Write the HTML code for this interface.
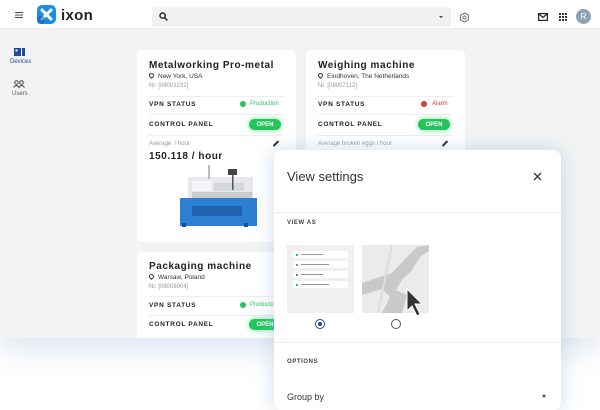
<!DOCTYPE html>
<html><head><meta charset="utf-8"><style>
*{box-sizing:border-box;margin:0;padding:0}
body{width:600px;height:400px;overflow:hidden;background:#fff;font-family:"Liberation Sans",sans-serif;position:relative;color:#222}
.abs{position:absolute}
.app{left:0;top:0;width:600px;height:338px;background:#f3f3f3;box-shadow:0 10px 30px rgba(170,195,225,.45)}
.top{left:0;top:0;width:600px;height:29px;background:#fff;border-bottom:1px solid #ececec}
.card{background:#fff;border-radius:5px;position:absolute}
.t{font-weight:bold;font-size:10px;letter-spacing:.55px;color:#222;position:absolute;left:12px;white-space:nowrap}
.s{font-size:6.5px;color:#333;position:absolute;left:12px;white-space:nowrap}
.g{font-size:6px;color:#999;position:absolute;left:12px;white-space:nowrap}
.lb{font-size:6.5px;font-weight:bold;letter-spacing:.7px;color:#222;position:absolute;left:12px}
.hr{position:absolute;left:12px;right:12px;height:1px;background:#eee}
.dot{position:absolute;width:6px;height:6px;border-radius:3px}
.open{position:absolute;width:32px;height:11px;border-radius:6px;background:#25c55c;color:#fff;font-size:6px;font-weight:bold;display:flex;align-items:center;justify-content:center;box-shadow:0 0 6px rgba(37,197,92,.6)}
.pin{display:inline-block;width:5px;height:5px;border-radius:50% 50% 50% 0;transform:rotate(-45deg);border:1.3px solid #333;margin-right:4px}
</style></head><body>
<div class="abs app"></div>
<div class="abs top"></div>
<div class="abs" style="left:15px;top:12px;width:8px;height:1.3px;background:#444;box-shadow:0 2.5px 0 #444,0 5px 0 #444"></div>
<svg class="abs" style="left:37px;top:5px" width="19" height="19" viewBox="0 0 19 19"><rect x="0" y="0" width="19" height="19" rx="5" fill="#1a8fe0"/><path d="M5 5L14 14M14 5L5 14" stroke="#fff" stroke-width="3" stroke-linecap="round"/><rect x="0" y="11" width="8" height="8" rx="3" fill="#1660b8" opacity=".6"/></svg>
<div class="abs" style="left:61px;top:7px;font-size:15px;font-weight:bold;color:#222;letter-spacing:.3px">ixon</div>
<div class="abs" style="left:152px;top:7px;width:299px;height:20px;background:#f1f1f1;border-radius:2px"></div>
<svg class="abs" style="left:159px;top:12px" width="9" height="9"><circle cx="3.6" cy="3.6" r="2.6" stroke="#222" stroke-width="1.4" fill="none"/><path d="M5.5 5.5L8.3 8.3" stroke="#222" stroke-width="1.5"/></svg>
<div class="abs" style="left:439px;top:16px;border:2px solid transparent;border-top:2.5px solid #444"></div>
<svg class="abs" style="left:459px;top:12px" width="11" height="11"><path d="M5.5 1L9.5 3.2V7.8L5.5 10L1.5 7.8V3.2Z" fill="none" stroke="#777" stroke-width="1"/><circle cx="5.5" cy="5.5" r="1.6" fill="none" stroke="#777"/></svg>
<svg class="abs" style="left:538px;top:13px" width="10" height="8"><rect x=".6" y=".6" width="8.8" height="6.8" fill="none" stroke="#222" stroke-width="1.2"/><path d="M1 1L5 4.5L9 1" fill="none" stroke="#222" stroke-width="1.2"/></svg>
<svg class="abs" style="left:559px;top:13px" width="8" height="8" fill="#333"><rect x="0" y="0" width="2" height="2"/><rect x="3" y="0" width="2" height="2"/><rect x="6" y="0" width="2" height="2"/><rect x="0" y="3" width="2" height="2"/><rect x="3" y="3" width="2" height="2"/><rect x="6" y="3" width="2" height="2"/><rect x="0" y="6" width="2" height="2"/><rect x="3" y="6" width="2" height="2"/><rect x="6" y="6" width="2" height="2"/></svg>
<div class="abs" style="left:576px;top:9px;width:15px;height:15px;border-radius:50%;background:#8ea3b4;color:#fff;font-size:8px;text-align:center;line-height:15px">R</div>
<svg class="abs" style="left:14px;top:48px" width="11" height="8"><rect x="0" y="0" width="7" height="8" fill="#1c4a9c"/><rect x="8" y="0" width="3" height="8" fill="#1c4a9c"/><rect x="1.5" y="1.5" width="2" height="2" fill="#fff"/></svg>
<div class="abs" style="left:10px;top:59px;font-size:6px;color:#1c4a9c">Devices</div>
<svg class="abs" style="left:13px;top:80px" width="12" height="8"><circle cx="3.5" cy="2.5" r="1.8" fill="none" stroke="#444"/><circle cx="8.5" cy="2.5" r="1.8" fill="none" stroke="#444"/><path d="M.5 7.5Q3.5 3.5 6 7.5Q8.5 3.5 11.5 7.5" fill="none" stroke="#444"/></svg>
<div class="abs" style="left:12px;top:91px;font-size:6px;color:#555">Users</div>

<div class="card" style="left:137px;top:50px;width:159px;height:192px">
<div class="t" style="top:10px">Metalworking Pro-metal</div>
<div class="s" style="top:23px"><span class="pin"></span>New York, USA</div>
<div class="g" style="top:33px">Nr. [08001232]</div>
<div class="hr" style="top:46px"></div>
<div class="lb" style="top:51px">VPN STATUS</div>
<div class="dot" style="left:103px;top:51px;background:#25c55c"></div>
<div class="s" style="left:113px;top:51px;color:#25c55c;font-size:6px">Production</div>
<div class="hr" style="top:64px"></div>
<div class="lb" style="top:71px">CONTROL PANEL</div>
<div class="open" style="left:112px;top:69px">OPEN</div>
<div class="hr" style="top:85px"></div>
<div class="g" style="top:91px">Average &nbsp;/ hour</div>
<div class="abs" style="left:138px;top:90px;width:1.8px;height:7px;background:#222;transform:rotate(45deg)"></div>
<div class="t" style="top:101px">150.118 / hour</div>
<svg class="abs" style="left:41px;top:115px" width="80" height="70">
<rect x="10" y="12" width="65" height="22" fill="#e6e8ec"/><rect x="14" y="16" width="20" height="10" fill="#f5f5f7"/><rect x="36" y="18" width="30" height="8" fill="#d4d7dc"/><rect x="50" y="4" width="9" height="6" fill="#444"/><rect x="54" y="10" width="1.5" height="15" fill="#555"/><rect x="30" y="0" width="2" height="14" fill="#bbb"/><rect x="14" y="27" width="60" height="6" fill="#c8cbd0"/>
<rect x="2" y="33" width="77" height="28" fill="#2d7fd3"/><rect x="14" y="41" width="50" height="10" fill="#1f63b0"/><rect x="4" y="58" width="4" height="4" fill="#1a4f90"/><rect x="66" y="58" width="4" height="4" fill="#1a4f90"/></svg>
</div>

<div class="card" style="left:306px;top:50px;width:159px;height:110px">
<div class="t" style="top:10px">Weighing machine</div>
<div class="s" style="top:23px"><span class="pin"></span>Eindhoven, The Netherlands</div>
<div class="g" style="top:33px">Nr. [08007112]</div>
<div class="hr" style="top:46px"></div>
<div class="lb" style="top:51px">VPN STATUS</div>
<div class="dot" style="left:115px;top:51px;background:#e53935"></div>
<div class="s" style="left:126px;top:51px;color:#e53935;font-size:6px">Alarm</div>
<div class="hr" style="top:64px"></div>
<div class="lb" style="top:71px">CONTROL PANEL</div>
<div class="open" style="left:112px;top:69px">OPEN</div>
<div class="hr" style="top:85px"></div>
<div class="g" style="top:91px">Average broken eggs / hour</div>
<div class="abs" style="left:138px;top:90px;width:1.8px;height:7px;background:#222;transform:rotate(45deg)"></div>
</div>

<div class="card" style="left:137px;top:252px;width:159px;height:86px;border-radius:5px 5px 0 0">
<div class="t" style="top:9px">Packaging machine</div>
<div class="s" style="top:22px"><span class="pin"></span>Warsaw, Poland</div>
<div class="g" style="top:32px">Nr. [08008004]</div>
<div class="hr" style="top:44px"></div>
<div class="lb" style="top:50px">VPN STATUS</div>
<div class="dot" style="left:103px;top:50px;background:#25c55c"></div>
<div class="s" style="left:113px;top:50px;color:#25c55c;font-size:6px">Production</div>
<div class="hr" style="top:63px"></div>
<div class="lb" style="top:69px">CONTROL PANEL</div>
<div class="open" style="left:112px;top:67px">OPEN</div>
</div>

<div class="abs" style="left:274px;top:150px;width:287px;height:260px;background:#fff;border-radius:8px;box-shadow:0 0 20px rgba(150,180,215,.45)">
<div class="abs" style="left:13px;top:19px;font-size:13px;color:#333">View settings</div>
<svg class="abs" style="left:259px;top:22px" width="9" height="9"><path d="M1 1L8 8M8 1L1 8" stroke="#333" stroke-width="1.3"/></svg>
<div class="abs" style="left:0;right:0;top:62px;height:1px;background:#ececec"></div>
<div class="abs" style="left:13px;top:70px;font-size:6px;font-weight:bold;letter-spacing:.6px;color:#444">VIEW AS</div>
<div class="abs" style="left:13px;top:95px;width:67px;height:68px;background:#f0f0f0">
<div class="abs" style="left:6px;top:6px;width:55px;height:7px;background:#fff"><div class="abs" style="left:3px;top:2.5px;width:2px;height:2px;background:#25c55c"></div><div class="abs" style="left:8px;top:3px;width:22px;height:1px;background:#999"></div></div>
<div class="abs" style="left:6px;top:16px;width:55px;height:7px;background:#fff"><div class="abs" style="left:3px;top:2.5px;width:2px;height:2px;background:#25c55c"></div><div class="abs" style="left:8px;top:3px;width:28px;height:1px;background:#999"></div></div>
<div class="abs" style="left:6px;top:26px;width:55px;height:7px;background:#fff"><div class="abs" style="left:3px;top:2.5px;width:2px;height:2px;background:#777"></div><div class="abs" style="left:8px;top:3px;width:22px;height:1px;background:#999"></div></div>
<div class="abs" style="left:6px;top:36px;width:55px;height:7px;background:#fff"><div class="abs" style="left:3px;top:2.5px;width:2px;height:2px;background:#25c55c"></div><div class="abs" style="left:8px;top:3px;width:28px;height:1px;background:#999"></div></div>
</div>
<svg class="abs" style="left:88px;top:95px" width="80" height="72">
<rect width="67" height="68" fill="#ebebeb"/>
<path d="M0 38L30 28L45 12L55 2L67 0V6L58 12L50 25L40 35L34 45L45 50L40 68H20L28 52L20 44L0 50Z" fill="#c9c9c9"/>
<path d="M16 68L30 0" stroke="#ddd" stroke-width="2"/>
<path d="M45 44L45 66L50 61L55 71L58 69L53 59L60 59Z" fill="#333" stroke="#fff" stroke-width="1"/>
</svg>
<div class="abs" style="left:41px;top:169px;width:10px;height:10px;border-radius:50%;border:1.3px solid #1c4a9c"><div class="abs" style="left:2px;top:2px;width:3.5px;height:3.5px;border-radius:50%;background:#1c4a9c"></div></div>
<div class="abs" style="left:117px;top:169px;width:10px;height:10px;border-radius:50%;border:1px solid #555"></div>
<div class="abs" style="left:0;right:0;top:192px;height:1px;background:#ececec"></div>
<div class="abs" style="left:13px;top:209px;font-size:6px;font-weight:bold;letter-spacing:.6px;color:#444">OPTIONS</div>
<div class="abs" style="left:13px;top:242px;font-size:9px;color:#333">Group by</div>
<div class="abs" style="left:268px;top:245px;border:2.5px solid transparent;border-top:3px solid #444"></div>
</div>
</body></html>
